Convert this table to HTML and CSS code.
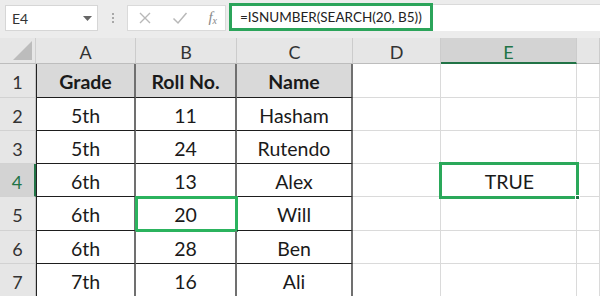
FILE: index.html
```html
<!DOCTYPE html>
<html lang="en">
<head>
<meta charset="utf-8">
<title>Sheet1</title>
<link rel="stylesheet" href="styles.css">
</head>
<body>
<div class="app">
  <div class="toolbar">
    <div class="namebox">
      <span class="namebox-text">E4</span>
      <svg class="caret" width="9" height="5" viewBox="0 0 9 5"><path d="M0 0h9L4.5 5z" fill="#666"/></svg>
    </div>
    <div class="grip"><i></i><i></i><i></i></div>
    <div class="fxbox">
      <svg class="fx-icon" width="14" height="14" viewBox="0 0 14 14"><path d="M2 2l10 10M12 2L2 12" stroke="#b8b8b8" stroke-width="1.4" fill="none"/></svg>
      <svg class="fx-icon" width="16" height="14" viewBox="0 0 16 14"><path d="M1.5 7.5l4.5 4.5L14.5 2" stroke="#b8b8b8" stroke-width="1.5" fill="none"/></svg>
      <span class="fx-label">f<sub>x</sub></span>
    </div>
    <div class="formula">
      <div class="formula-text">=ISNUMBER(SEARCH(20, B5))</div>
    </div>
  </div>

  <div class="grid">
    <div class="corner"><span class="corner-tri"></span></div>
    <div class="colhead">A</div>
    <div class="colhead">B</div>
    <div class="colhead">C</div>
    <div class="colhead">D</div>
    <div class="colhead active">E</div>
    <div class="colhead"></div>

    <div class="rowhead">1</div>
    <div class="cell t head first">Grade</div>
    <div class="cell t head">Roll No.</div>
    <div class="cell t head">Name</div>
    <div class="cell"></div><div class="cell"></div><div class="cell"></div>

    <div class="rowhead">2</div>
    <div class="cell t first">5th</div>
    <div class="cell t">11</div>
    <div class="cell t">Hasham</div>
    <div class="cell"></div><div class="cell"></div><div class="cell"></div>

    <div class="rowhead">3</div>
    <div class="cell t first">5th</div>
    <div class="cell t">24</div>
    <div class="cell t">Rutendo</div>
    <div class="cell"></div><div class="cell"></div><div class="cell"></div>

    <div class="rowhead active">4</div>
    <div class="cell t first">6th</div>
    <div class="cell t">13</div>
    <div class="cell t">Alex</div>
    <div class="cell"></div>
    <div class="cell selected">TRUE<span class="handle"></span></div>
    <div class="cell"></div>

    <div class="rowhead">5</div>
    <div class="cell t first">6th</div>
    <div class="cell t ref">20</div>
    <div class="cell t">Will</div>
    <div class="cell"></div><div class="cell"></div><div class="cell"></div>

    <div class="rowhead">6</div>
    <div class="cell t first">6th</div>
    <div class="cell t">28</div>
    <div class="cell t">Ben</div>
    <div class="cell"></div><div class="cell"></div><div class="cell"></div>

    <div class="rowhead">7</div>
    <div class="cell t first">7th</div>
    <div class="cell t">16</div>
    <div class="cell t">Ali</div>
    <div class="cell"></div><div class="cell"></div><div class="cell"></div>
  </div>
</div>
</body>
</html>
```

FILE: styles.css
```css
* { box-sizing: border-box; }

html, body {
  margin: 0;
  padding: 0;
  background: #ffffff;
}

.app {
  width: 600px;
  height: 296px;
  overflow: hidden;
  background: #e9e9e9;
  font-family: Lato, "Open Sans", sans-serif;
}

/* ---- formula bar ---- */
.toolbar {
  height: 38px;
  display: flex;
  align-items: flex-start;
  padding: 4px 0 0 5px;
  background: #ececec;
}

.namebox {
  width: 93px;
  height: 26px;
  margin-top: 1px;
  background: #fff;
  border: 1px solid #d6d6d6;
  display: flex;
  align-items: center;
  justify-content: space-between;
  padding: 0 5px 0 6px;
  font-size: 14px;
  color: #333;
}

.grip {
  width: 29px;
  display: flex;
  flex-direction: column;
  align-items: center;
  gap: 2px;
  padding-top: 9px;
}
.grip i {
  width: 2px;
  height: 2px;
  background: #a8a8a8;
}

.fxbox {
  width: 99px;
  height: 26px;
  margin-top: 1px;
  background: #fff;
  border: 1px solid #dadada;
  display: flex;
  align-items: center;
  justify-content: space-between;
  padding: 0 8px 0 10px;
}
.fx-label {
  font-family: "Liberation Serif", serif;
  font-style: italic;
  font-size: 15px;
  color: #888;
  line-height: 1;
}
.fx-label sub {
  font-size: 10px;
  vertical-align: -2px;
}

.formula {
  flex: 1;
  height: 27px;
  margin-left: 3px;
  background: #fff;
  border-top: 1px solid #dadada;
  display: flex;
}
.formula-text {
  width: 204px;
  height: 28px;
  margin-top: -2px;
  border: 3px solid #2ba45a;
  padding: 0 0 0 8px;
  display: flex;
  align-items: center;
  white-space: nowrap;
  font-size: 13.5px;
  color: #222;
  background: #fff;
}

/* ---- sheet grid ---- */
.grid {
  display: grid;
  grid-template-columns: 36px 100px 101px 116px 88px 136px 1fr;
  grid-template-rows: 26px 34px 33px 33px 33px 34px 33px 33px;
  background: #fff;
}

.corner {
  background: #e6e6e6;
  border-right: 1px solid #cfcfcf;
  border-bottom: 1px solid #bdbdbd;
  display: flex;
  align-items: flex-end;
  justify-content: flex-end;
  padding: 0 3px 3px 0;
}
.corner-tri {
  width: 0;
  height: 0;
  border-left: 19px solid transparent;
  border-bottom: 19px solid #bcbcbc;
}

.colhead {
  background: #e6e6e6;
  border-right: 1px solid #cccccc;
  border-bottom: 1px solid #bdbdbd;
  display: flex;
  align-items: center;
  justify-content: center;
  padding-top: 3px;
  font-size: 18px;
  color: #333;
}
.colhead.active {
  background: #d3d3d3;
  border-bottom: 2px solid #217346;
  color: #217346;
}

.rowhead {
  background: #e6e6e6;
  border-bottom: 1px solid #d2d2d2;
  border-right: 1px solid #c4c4c4;
  display: flex;
  align-items: center;
  justify-content: center;
  padding-top: 3px;
  font-size: 18px;
  color: #333;
}
.rowhead.active {
  background: #d3d3d3;
  color: #217346;
  border-right: 2px solid #217346;
}

.cell {
  border-right: 1px solid #dadada;
  border-bottom: 1px solid #dadada;
  display: flex;
  align-items: center;
  justify-content: center;
  padding-top: 2px;
  font-size: 19.5px;
  color: #1a1a1a;
  position: relative;
}

/* bordered data table A1:C7 */
.cell.t {
  border-right: 2px solid #707070;
  border-bottom: 1px solid #1e1e1e;
}
.cell.t.first {
  border-left: 1px solid #222;
}
.cell.head {
  background: #d9d9d9;
  font-weight: bold;
}

/* referenced cell in the formula */
.cell.ref {
  outline: 3px solid #2bb35e;
  outline-offset: -2px;
}

/* active cell */
.cell.selected {
  outline: 3px solid #2aa85a;
  outline-offset: -1px;
  z-index: 2;
  padding-left: 2px;
}
.handle {
  position: absolute;
  right: -4px;
  bottom: -4px;
  width: 5px;
  height: 5px;
  background: #217346;
  border: 1px solid #fff;
}
```
